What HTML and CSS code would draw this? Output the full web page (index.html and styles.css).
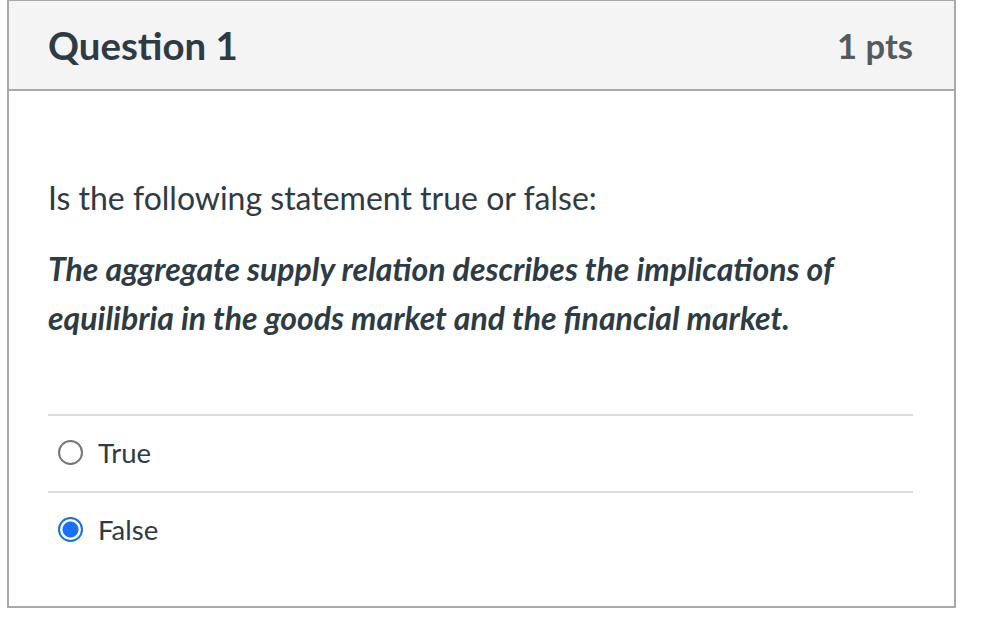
FILE: index.html
```html
<!DOCTYPE html>
<html>
<head>
<meta charset="utf-8">
<link rel="stylesheet" href="styles.css">
</head>
<body>
<div class="card">
  <div class="header">
    <h2 class="title">Question 1</h2>
    <div class="pts">1 pts</div>
  </div>
  <div class="content">
    <p class="prompt">Is the following statement true or false:</p>
    <p class="statement">The aggregate supply relation describes the implications of equilibria in the goods market and the financial market.</p>
    <div class="answers">
      <div class="answer">
        <span class="radio"></span>
        <span class="label">True</span>
      </div>
      <div class="answer">
        <span class="radio checked"></span>
        <span class="label">False</span>
      </div>
    </div>
  </div>
</div>
</body>
</html>
```
FILE: styles.css
```css
html, body {
  margin: 0;
  padding: 0;
  background: #ffffff;
}
body {
  font-family: Lato, "Noto Sans", sans-serif;
  color: #2d3b45;
}
.card {
  margin-left: 7px;
  width: 945px;
  border: 2px solid #a8a8a8;
  border-top-width: 1px;
  background: #fff;
}
.header {
  display: flex;
  justify-content: space-between;
  align-items: center;
  height: 88px;
  padding: 0 41px 0 39px;
  background: #f4f4f4;
  border-bottom: 2px solid #a8a8a8;
}
.title {
  margin: 0;
  font-size: 38.4px;
  font-weight: 700;
  color: #2d3b45;
}
.pts {
  font-size: 34.6px;
  font-weight: 700;
  color: #555a5e;
}
.content {
  padding: 87px 41px 38px 39px;
}
.prompt {
  margin: 0 0 26px;
  font-size: 32px;
  line-height: 40px;
}
.statement {
  margin: 0;
  font-size: 32px;
  line-height: 49px;
  font-weight: 700;
  font-style: italic;
}
.answers {
  margin-top: 72px;
}
.answer {
  display: flex;
  align-items: center;
  gap: 15px;
  height: 72px;
  padding: 0 0 3px 10px;
  border-top: 2px solid #dcdcdc;
  font-size: 27.5px;
}
.radio {
  width: 21px;
  height: 21px;
  border: 2px solid #757575;
  border-radius: 50%;
  flex: none;
  box-sizing: content-box;
}
.radio.checked {
  border: 2px solid #1470e0;
  width: 21px;
  height: 21px;
  background: radial-gradient(circle, #1a6fff 0 7.5px, #fff 8.5px);
}
```
